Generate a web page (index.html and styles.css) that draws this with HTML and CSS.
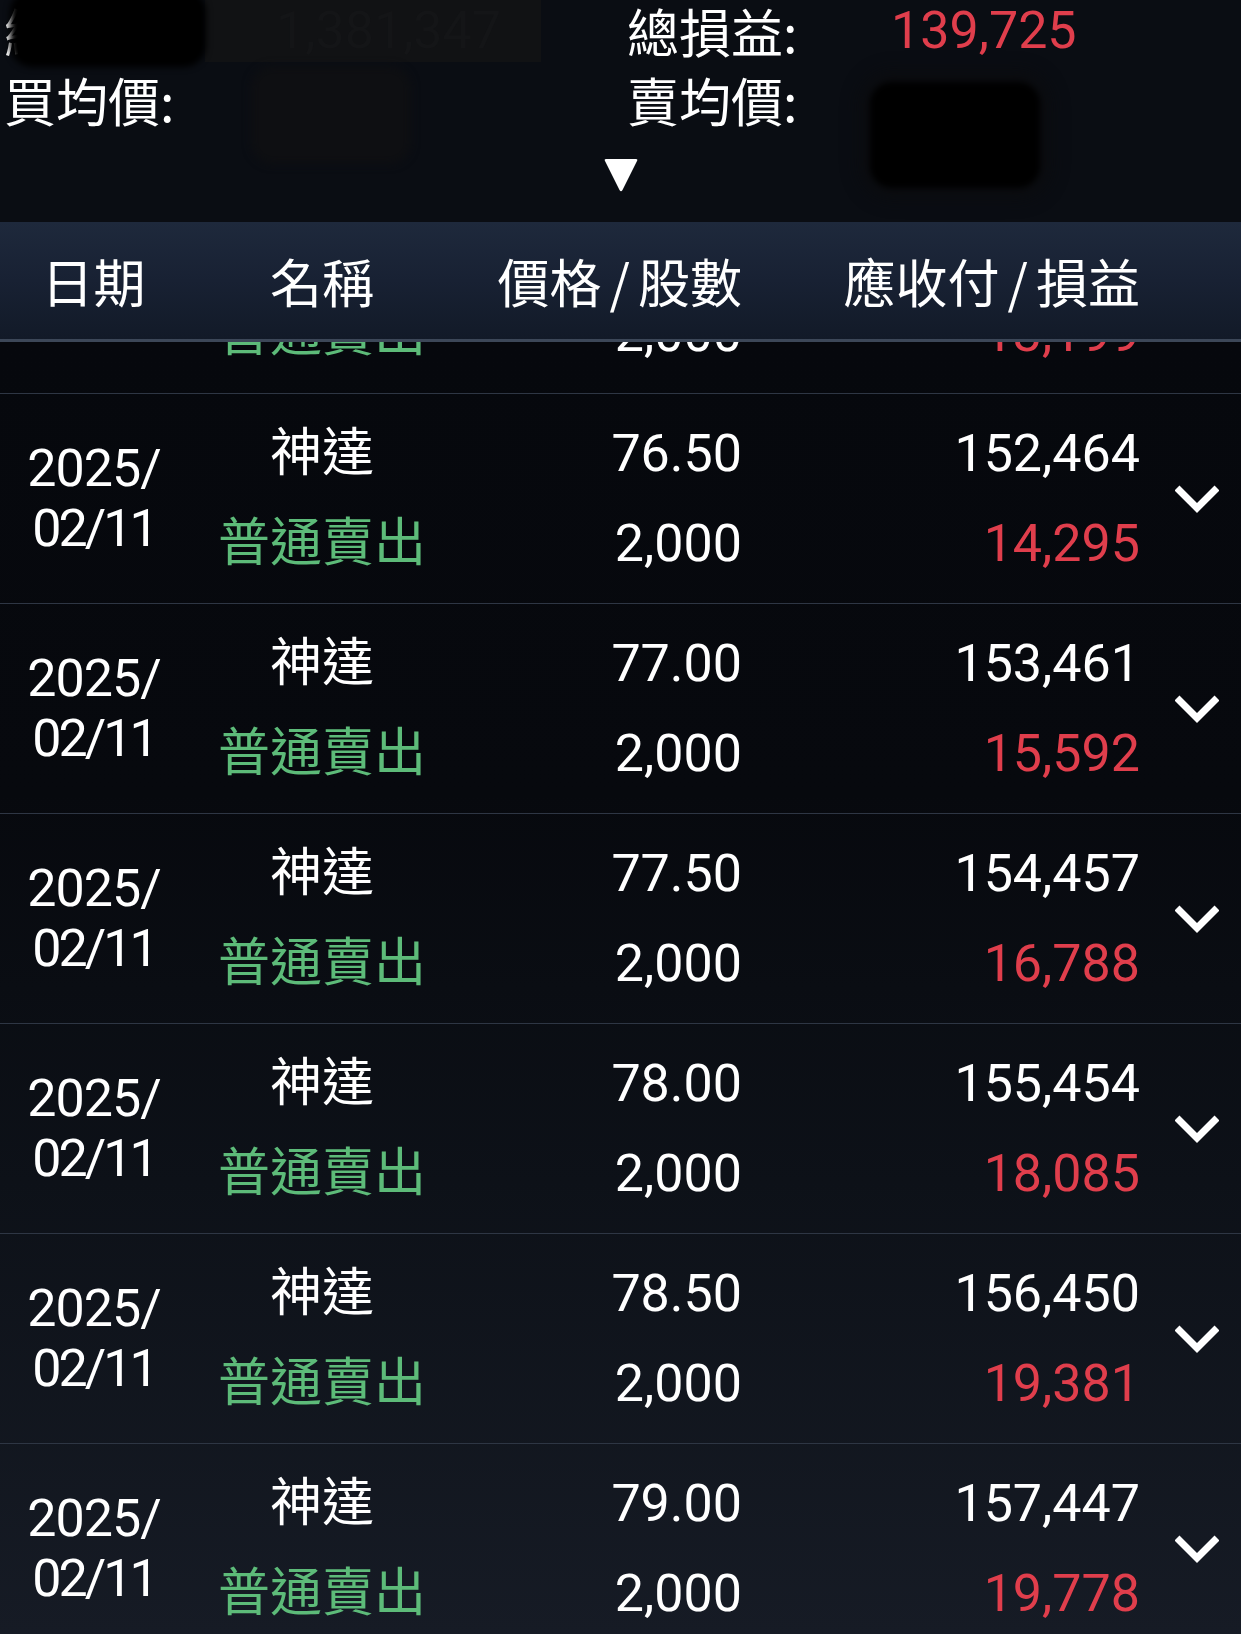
FILE: index.html
```html
<!DOCTYPE html>
<html lang="zh-Hant">
<head>
<meta charset="utf-8">
<title>已實現損益</title>
<link rel="stylesheet" href="styles.css">
</head>
<body>
<div class="page">
  <section class="summary">
    <div class="sum-row">
      <span class="lbl">總成本:</span>
      <span class="cell"><span class="ghost">1,381,347</span></span>
      <span class="lbl">總損益:</span>
      <span class="val red">139,725</span>
    </div>
    <div class="sum-row second">
      <span class="lbl">買均價:</span>
      <span class="cell"></span>
      <span class="lbl">賣均價:</span>
      <span class="val"></span>
    </div>
    <div class="toggle">
      <svg width="36" height="36" viewBox="0 0 36 36"><path d="M3 2 H33 Q35 2 34 4 L19.5 33 Q18 35.5 16.5 33 L2 4 Q1 2 3 2 Z" fill="#ffffff"/></svg>
    </div>
    <div class="redact r-a"></div>
    <div class="redact r-c"></div>
    <div class="redact r-d"></div>
  </section>

  <div class="thead grid">
    <div class="th c">日期</div>
    <div class="th c">名稱</div>
    <div class="th r">價格<span class="sl">/</span>股數</div>
    <div class="th r">應收付<span class="sl">/</span>損益</div>
    <div></div>
  </div>

  <div class="list">
    <div class="list-inner">
      <div class="row grid">
        <div class="date"><span class="y">2025/</span><br><span class="md">02/11</span></div>
        <div class="two c"><div>神達</div><div class="green">普通賣出</div></div>
        <div class="two r"><div>76.00</div><div>2,000</div></div>
        <div class="two r"><div>151,467</div><div class="red">13,199</div></div>
        <div class="chev"><svg width="44" height="28" viewBox="0 0 44 28"><polyline points="2,3 22,23 42,3" fill="none" stroke="#fff" stroke-width="7"/></svg></div>
      </div>
      <div class="row grid">
        <div class="date"><span class="y">2025/</span><br><span class="md">02/11</span></div>
        <div class="two c"><div>神達</div><div class="green">普通賣出</div></div>
        <div class="two r"><div>76.50</div><div>2,000</div></div>
        <div class="two r"><div>152,464</div><div class="red">14,295</div></div>
        <div class="chev"><svg width="44" height="28" viewBox="0 0 44 28"><polyline points="2,3 22,23 42,3" fill="none" stroke="#fff" stroke-width="7"/></svg></div>
      </div>
      <div class="row grid">
        <div class="date"><span class="y">2025/</span><br><span class="md">02/11</span></div>
        <div class="two c"><div>神達</div><div class="green">普通賣出</div></div>
        <div class="two r"><div>77.00</div><div>2,000</div></div>
        <div class="two r"><div>153,461</div><div class="red">15,592</div></div>
        <div class="chev"><svg width="44" height="28" viewBox="0 0 44 28"><polyline points="2,3 22,23 42,3" fill="none" stroke="#fff" stroke-width="7"/></svg></div>
      </div>
      <div class="row grid">
        <div class="date"><span class="y">2025/</span><br><span class="md">02/11</span></div>
        <div class="two c"><div>神達</div><div class="green">普通賣出</div></div>
        <div class="two r"><div>77.50</div><div>2,000</div></div>
        <div class="two r"><div>154,457</div><div class="red">16,788</div></div>
        <div class="chev"><svg width="44" height="28" viewBox="0 0 44 28"><polyline points="2,3 22,23 42,3" fill="none" stroke="#fff" stroke-width="7"/></svg></div>
      </div>
      <div class="row grid">
        <div class="date"><span class="y">2025/</span><br><span class="md">02/11</span></div>
        <div class="two c"><div>神達</div><div class="green">普通賣出</div></div>
        <div class="two r"><div>78.00</div><div>2,000</div></div>
        <div class="two r"><div>155,454</div><div class="red">18,085</div></div>
        <div class="chev"><svg width="44" height="28" viewBox="0 0 44 28"><polyline points="2,3 22,23 42,3" fill="none" stroke="#fff" stroke-width="7"/></svg></div>
      </div>
      <div class="row grid">
        <div class="date"><span class="y">2025/</span><br><span class="md">02/11</span></div>
        <div class="two c"><div>神達</div><div class="green">普通賣出</div></div>
        <div class="two r"><div>78.50</div><div>2,000</div></div>
        <div class="two r"><div>156,450</div><div class="red">19,381</div></div>
        <div class="chev"><svg width="44" height="28" viewBox="0 0 44 28"><polyline points="2,3 22,23 42,3" fill="none" stroke="#fff" stroke-width="7"/></svg></div>
      </div>
      <div class="row grid">
        <div class="date"><span class="y">2025/</span><br><span class="md">02/11</span></div>
        <div class="two c"><div>神達</div><div class="green">普通賣出</div></div>
        <div class="two r"><div>79.00</div><div>2,000</div></div>
        <div class="two r"><div>157,447</div><div class="red">19,778</div></div>
        <div class="chev"><svg width="44" height="28" viewBox="0 0 44 28"><polyline points="2,3 22,23 42,3" fill="none" stroke="#fff" stroke-width="7"/></svg></div>
      </div>
    </div>
  </div>
</div>
</body>
</html>
```

FILE: styles.css
```css
* { box-sizing: border-box; }
html, body {
  margin: 0;
  padding: 0;
  background: #0a0d13;
}
body {
  width: 1241px;
  height: 1634px;
  overflow: hidden;
  font-family: Roboto, "Noto Sans CJK TC", sans-serif;
  font-size: 52px;
  color: #ffffff;
}
.page {
  width: 1241px;
  height: 1634px;
  display: flex;
  flex-direction: column;
}

/* summary */
.summary {
  position: relative;
  height: 222px;
  flex: none;
  background: #0a0d13;
}
.sum-row {
  display: grid;
  grid-template-columns: 200px 423px 264px 1fr;
  padding-left: 4px;
  height: 62px;
  line-height: 62px;
  white-space: nowrap;
}
.sum-row.second { margin-top: 7px; }
.lbl { font-family: "Noto Sans CJK TC", sans-serif; }
.cell { display: block; }
.ghost {
  display: inline-block;
  width: 336px;
  height: 62px;
  margin-left: 1px;
  padding-left: 71px;
  background: #111214;
  color: #141517;
}
.val { display: block; }
.red { color: #e03e4c; }
.green { color: #5dbb79; }
.toggle {
  margin-top: 26px;
  height: 36px;
  display: flex;
  justify-content: center;
  padding-left: 1px;
}
.toggle svg { display: block; }

.redact {
  position: absolute;
  border-radius: 22px;
}
.r-a {
  left: 10px; top: -10px; width: 196px; height: 77px;
  background: #000;
  filter: blur(3px);
}
.r-c {
  left: 251px; top: 66px; width: 160px; height: 98px;
  background: #0e0f12;
  filter: blur(4px);
}
.r-d {
  left: 870px; top: 82px; width: 170px; height: 106px;
  background: #000;
  box-shadow: 0 0 16px 10px #0b0c0f;
  filter: blur(3px);
}

/* table */
.grid {
  display: grid;
  grid-template-columns: 187px 270px 285px 398px 101px;
}
.thead {
  flex: none;
  height: 120px;
  border-bottom: 3px solid #3c4758;
  background: linear-gradient(to bottom, #1e293c 0%, #182133 50%, #121a28 100%);
  align-items: center;
  font-family: "Noto Sans CJK TC", sans-serif;
  line-height: 52px;
  position: relative;
  z-index: 2;
}
.c { text-align: center; }
.r { text-align: right; }
.sl { margin: 0 8px; }

.list {
  flex: 1;
  overflow: hidden;
  background: linear-gradient(to bottom, #06080d 0%, #07090e 35%, #0d1118 65%, #161b25 100%);
}
.list-inner { margin-top: -158px; }
.row {
  height: 210px;
  border-bottom: 1px solid #2e3644;
  white-space: nowrap;
}
.date {
  align-self: center;
  text-align: center;
  line-height: 60px;
  padding-left: 1px;
}
.date .y { letter-spacing: -1px; }
.date .md { letter-spacing: -3px; }
.two {
  padding-top: 15px;
  line-height: 90px;
}
.num-end { padding-right: 0; }
.chev {
  align-self: center;
  display: flex;
  justify-content: flex-end;
  padding-right: 22px;
}
.chev svg { display: block; }
```
